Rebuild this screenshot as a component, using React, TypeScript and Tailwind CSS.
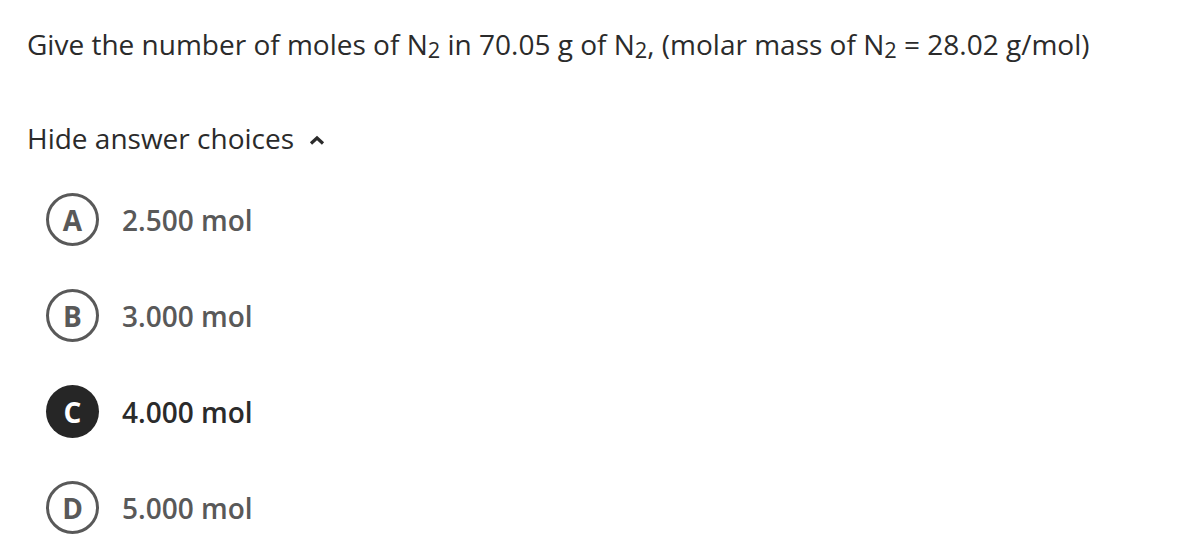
import { useState } from 'react';

const choices = [
  { key: 'A', label: '2.500 mol' },
  { key: 'B', label: '3.000 mol' },
  { key: 'C', label: '4.000 mol' },
  { key: 'D', label: '5.000 mol' },
];

function N2() {
  return (
    <>
      N<sub className="text-[0.78em] relative top-[0.15em] align-baseline">2</sub>
    </>
  );
}

export default function App() {
  const [selected, setSelected] = useState('C');
  const [open, setOpen] = useState(true);

  return (
    <div className="min-h-screen bg-white text-[#2b2b2b]" style={{ fontFamily: '"Open Sans", sans-serif' }}>
      <div className="pl-[27px] pt-[24px]">
        <p className="text-[28px] leading-[40px]">
          Give the number of moles of <N2 /> in 70.05 g of <N2 />, (molar mass of <N2 /> = 28.02 g/mol)
        </p>

        <button
          onClick={() => setOpen(!open)}
          className="mt-[54px] flex items-center gap-[15px] text-[28px] leading-[40px] text-[#2b2b2b]"
        >
          Hide answer choices
          <svg width="16" height="10" viewBox="0 0 16 10" className="mt-[4px]">
            <path d="M2 8.5 L8 3 L14 8.5" fill="none" stroke="#2b2b2b" strokeWidth="3.2" />
          </svg>
        </button>

        <div className="mt-[35px] flex flex-col gap-[43px] pl-[19px]">
          {open &&
            choices.map((c) => {
              const isSel = c.key === selected;
              return (
                <button key={c.key} onClick={() => setSelected(c.key)} className="flex items-center gap-[23px]">
                  <span
                    className={
                      isSel
                        ? 'flex h-[53px] w-[53px] items-center justify-center rounded-full bg-[#262626] text-[28px] leading-none font-bold text-white'
                        : 'flex h-[53px] w-[53px] items-center justify-center rounded-full border-[3px] border-[#595959] text-[28px] leading-none font-bold text-[#595959]'
                    }
                  >
                    {c.key}
                  </span>
                  <span className={isSel ? 'text-[28px] font-semibold text-[#2b2b2b]' : 'text-[28px] font-semibold text-[#595959]'}>
                    {c.label}
                  </span>
                </button>
              );
            })}
        </div>
      </div>
    </div>
  );
}
